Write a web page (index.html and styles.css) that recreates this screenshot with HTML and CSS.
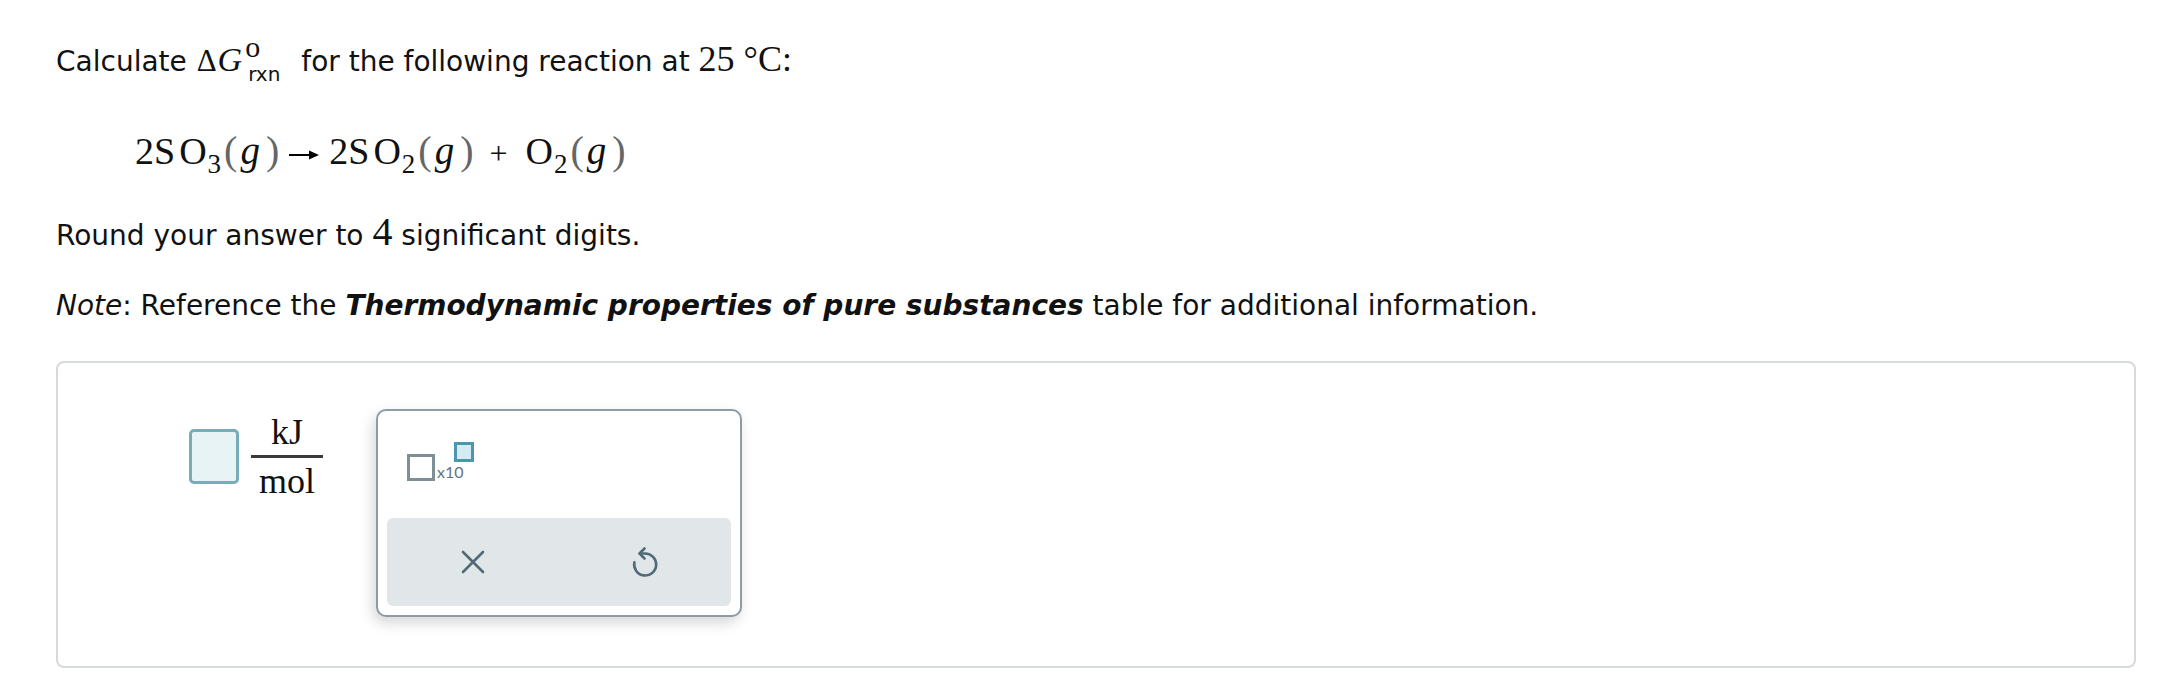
FILE: index.html
```html
<!DOCTYPE html>
<html lang="en">
<head>
<meta charset="utf-8">
<title>Calculate ΔG</title>
<link rel="stylesheet" href="styles.css">
</head>
<body>
<div class="page">
  <div class="line l1">Calculate <span class="m1"><span class="delta">Δ</span><span class="gi">G</span></span><span class="sup">o</span><span class="sub">rxn</span> for the following reaction at <span class="m2">25 °C:</span></div>

  <div class="eq"><span>2S</span><span class="o">O</span><span class="esub">3</span><span class="par">(</span><span class="g">g</span><span class="par">)</span><svg class="arrow" width="30" height="12" viewBox="0 0 30 12"><path d="M0 6H24" stroke="#000" stroke-width="2"/><path d="M20 1.5L30 6L20 10.5Z" fill="#000"/></svg><span>2S</span><span class="o">O</span><span class="esub">2</span><span class="par">(</span><span class="g">g</span><span class="par">)</span><span class="plus">+</span><span>O</span><span class="esub">2</span><span class="par p2">(</span><span class="g">g</span><span class="par">)</span></div>

  <div class="line l2">Round your answer to <span class="m4">4</span> significant digits.</div>

  <div class="line l3"><i>Note</i>: Reference the <b><i>Thermodynamic properties of pure substances</i></b> table for additional information.</div>

  <div class="panel">
    <div class="row">
      <div class="answer">
        <div class="inbox"></div>
        <div class="frac">
          <div class="num">kJ</div>
          <div class="bar"></div>
          <div class="den">mol</div>
        </div>
      </div>
      <div class="popup">
        <div class="pop-top">
          <div class="sci">
            <span class="sq"></span><span class="x10">x10</span><span class="supbox"></span>
          </div>
        </div>
        <div class="pop-btns">
          <div class="pbtn">
            <svg width="24" height="24" viewBox="0 0 24 24"><path d="M2 2L22 22M22 2L2 22" stroke="#4f6b78" stroke-width="2.6" stroke-linecap="round"/></svg>
          </div>
          <div class="pbtn">
            <svg width="26" height="32" viewBox="0 0 26 32" fill="none"><path d="M12.5 2.5L7.5 7.5L12.5 12.5" stroke="#4f6b78" stroke-width="2.6" stroke-linecap="round" stroke-linejoin="round"/><path d="M8 7.5H13A11 11 0 1 1 2.4 16.3" stroke="#4f6b78" stroke-width="2.6" stroke-linecap="round"/></svg>
          </div>
        </div>
      </div>
    </div>
  </div>
</div>
</body>
</html>
```
FILE: styles.css
```css
html, body {
  margin: 0;
  padding: 0;
  background: #fff;
}
body {
  font-family: "DejaVu Sans", Verdana, sans-serif;
  font-size: 28px;
  color: #111;
}
.page {
  padding: 40px 33px 0 56px;
}
.line {
  line-height: 40px;
  white-space: nowrap;
}
.m1, .m2, .m4 {
  font-family: "Liberation Serif", "Times New Roman", serif;
}
.m1 {
  font-size: 31px;
}
.m2 {
  font-size: 36px;
  line-height: 0;
}
.m4 {
  font-size: 40px;
  line-height: 0;
}
.delta {
  margin-left: 1px;
}
.gi {
  font-style: italic;
  font-size: 34px;
  margin-left: 1px;
}
.sup {
  font-family: "Liberation Serif", "Times New Roman", serif;
  font-size: 30px;
  line-height: 0;
  vertical-align: 14px;
  margin-left: 3px;
}
.sub {
  font-size: 20px;
  line-height: 0;
  vertical-align: -10px;
  margin-left: -12px;
  margin-right: 12px;
}
.eq {
  margin-top: 47px;
  padding-left: 79px;
  font-family: "Liberation Serif", "Times New Roman", serif;
  font-size: 38px;
  line-height: 44px;
  white-space: nowrap;
}
.eq .o {
  margin-left: 4px;
}
.esub {
  font-size: 27px;
  line-height: 0;
  vertical-align: -9px;
  margin-left: 1px;
}
.par {
  color: #666;
  font-size: 40px;
  line-height: 0;
  margin-left: 3px;
}
.p2 {
  margin-left: 3px;
}
.g {
  font-style: italic;
  font-size: 39px;
  line-height: 0;
  margin: 0 3px;
}
.arrow {
  vertical-align: middle;
  margin: 0 10px 0 10px;
}
.plus {
  font-size: 32px;
  line-height: 0;
  margin: 0 18px 0 16px;
}
.l2 {
  margin-top: 43px;
}
.l3 {
  margin-top: 30px;
}
.panel {
  margin-top: 35px;
  height: 307px;
  box-sizing: border-box;
  border: 2px solid #d6dadc;
  border-radius: 8px;
  padding: 46px 0 0 131px;
}
.row {
  display: flex;
  align-items: flex-start;
}
.answer {
  display: flex;
  align-items: center;
  gap: 12px;
  margin-top: 5px;
}
.inbox {
  width: 50px;
  height: 55px;
  box-sizing: border-box;
  border: 3px solid #77acbb;
  border-radius: 5px;
  background: #e8f3f6;
}
.frac {
  display: flex;
  flex-direction: column;
  align-items: center;
  font-family: "Liberation Serif", "Times New Roman", serif;
  font-size: 36px;
  color: #111;
}
.num, .den {
  line-height: 36px;
}
.bar {
  width: 72px;
  height: 3px;
  background: #3a3a3a;
  margin: 5px 0 5px;
}
.popup {
  margin-left: 53px;
  width: 366px;
  height: 208px;
  box-sizing: border-box;
  border: 2px solid #8d9ca3;
  border-radius: 10px;
  background: #fff;
  padding: 9px;
  box-shadow: -3px 6px 14px rgba(0, 0, 0, 0.16);
  display: flex;
  flex-direction: column;
}
.pop-top {
  height: 98px;
  box-sizing: border-box;
  padding: 22px 0 0 20px;
}
.sci {
  display: flex;
  align-items: flex-end;
  height: 39px;
}
.sq {
  width: 28px;
  height: 27px;
  box-sizing: border-box;
  border: 3px solid #7e9096;
}
.x10 {
  font-family: Lato, "Open Sans", sans-serif;
  font-size: 16px;
  line-height: 16px;
  color: #5f747c;
  margin-left: 2px;
  margin-bottom: 1px;
}
.supbox {
  align-self: flex-start;
  width: 20px;
  height: 20px;
  box-sizing: border-box;
  border: 3px solid #4a97ae;
  background: #d4ebf2;
  margin-left: -10px;
}
.pop-btns {
  height: 88px;
  background: #e1e6e9;
  border-radius: 6px;
  display: flex;
}
.pbtn {
  flex: 1;
  display: flex;
  align-items: center;
  justify-content: center;
}
```
